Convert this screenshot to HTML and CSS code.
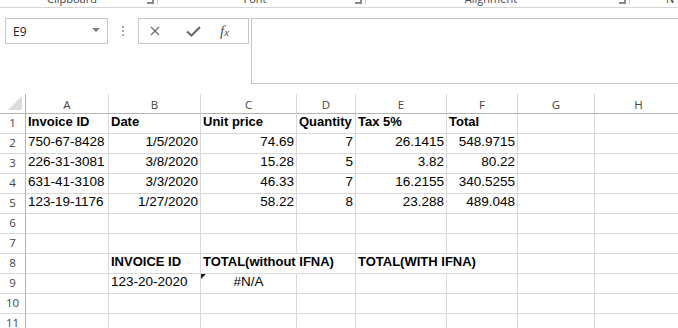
FILE: index.html
```html
<!DOCTYPE html>
<html>
<head>
<meta charset="utf-8">
<link rel="stylesheet" href="styles.css">
</head>
<body>
<div class="ribbon">
  <div class="grp g1"><span class="glabel">Clipboard</span><span class="launch"></span></div>
  <div class="grp g2"><span class="glabel">Font</span><span class="launch"></span></div>
  <div class="grp g3"><span class="glabel">Alignment</span><span class="launch"></span></div>
  <div class="grp g4"><span class="glabel">N</span></div>
</div>
<div class="fbar">
  <div class="namebox"><span class="nbtext">E9</span><span class="caret"></span></div>
  <div class="dots"><i></i><i></i><i></i></div>
  <div class="fnbox">
    <svg class="ico-x" width="10" height="10" viewBox="0 0 10 10"><path d="M1 1L9 9M9 1L1 9" stroke="#6f6f6f" stroke-width="1.4" fill="none"/></svg>
    <svg class="ico-ok" width="15" height="11" viewBox="0 0 15 11"><path d="M1 5.5L5.5 9.5L14 1" stroke="#6a6a6a" stroke-width="2.2" fill="none"/></svg>
    <span class="fx"><i>f</i><i class="sx">x</i></span>
  </div>
  <div class="finput"></div>
</div>
<div class="sheet">
  <div class="corner"><span class="tri"></span></div>
  <div class="ch">A</div><div class="ch">B</div><div class="ch">C</div><div class="ch">D</div><div class="ch">E</div><div class="ch">F</div><div class="ch">G</div><div class="ch">H</div>

  <div class="rh">1</div>
  <div class="c b">Invoice ID</div><div class="c b">Date</div><div class="c b">Unit price</div><div class="c b">Quantity</div><div class="c b">Tax 5%</div><div class="c b">Total</div><div class="c"></div><div class="c"></div>

  <div class="rh">2</div>
  <div class="c">750-67-8428</div><div class="c r">1/5/2020</div><div class="c r">74.69</div><div class="c r">7</div><div class="c r">26.1415</div><div class="c r">548.9715</div><div class="c"></div><div class="c"></div>

  <div class="rh">3</div>
  <div class="c">226-31-3081</div><div class="c r">3/8/2020</div><div class="c r">15.28</div><div class="c r">5</div><div class="c r">3.82</div><div class="c r">80.22</div><div class="c"></div><div class="c"></div>

  <div class="rh">4</div>
  <div class="c">631-41-3108</div><div class="c r">3/3/2020</div><div class="c r">46.33</div><div class="c r">7</div><div class="c r">16.2155</div><div class="c r">340.5255</div><div class="c"></div><div class="c"></div>

  <div class="rh">5</div>
  <div class="c">123-19-1176</div><div class="c r">1/27/2020</div><div class="c r">58.22</div><div class="c r">8</div><div class="c r">23.288</div><div class="c r">489.048</div><div class="c"></div><div class="c"></div>

  <div class="rh">6</div>
  <div class="c"></div><div class="c"></div><div class="c"></div><div class="c"></div><div class="c"></div><div class="c"></div><div class="c"></div><div class="c"></div>

  <div class="rh">7</div>
  <div class="c"></div><div class="c"></div><div class="c"></div><div class="c"></div><div class="c"></div><div class="c"></div><div class="c"></div><div class="c"></div>

  <div class="rh">8</div>
  <div class="c"></div><div class="c b">INVOICE ID</div><div class="c b ov">TOTAL(without IFNA)</div><div class="c"></div><div class="c b ov">TOTAL(WITH IFNA)</div><div class="c"></div><div class="c"></div><div class="c"></div>

  <div class="rh">9</div>
  <div class="c"></div><div class="c">123-20-2020</div><div class="c ctr err">#N/A<span class="errtri"></span></div><div class="c"></div><div class="c"></div><div class="c"></div><div class="c"></div><div class="c"></div>

  <div class="rh">10</div>
  <div class="c"></div><div class="c"></div><div class="c"></div><div class="c"></div><div class="c"></div><div class="c"></div><div class="c"></div><div class="c"></div>

  <div class="rh">11</div>
  <div class="c"></div><div class="c"></div><div class="c"></div><div class="c"></div><div class="c"></div><div class="c"></div><div class="c"></div><div class="c"></div>
</div>
</body>
</html>
```
FILE: styles.css
```css
html, body {
  margin: 0;
  padding: 0;
  background: #fff;
  overflow: hidden;
  width: 678px;
  height: 328px;
}
body {
  font-family: "Liberation Sans", Arial, sans-serif;
  color: #000;
}

/* ribbon remnant */
.ribbon {
  display: flex;
  height: 7px;
  border-bottom: 1px solid #d5d5d5;
  overflow: hidden;
}
.grp {
  display: flex;
  align-items: flex-start;
  box-sizing: border-box;
  height: 7px;
}
.g1 { width: 158px; }
.g2 { width: 208px; }
.g3 { width: 264px; }
.g4 { flex: 1; padding-left: 36px; }
.glabel {
  flex: 1;
  text-align: center;
  font-family: "Open Sans", "Noto Sans", sans-serif;
  font-size: 11px;
  line-height: 13px;
  color: #444;
  margin-top: -8px;
}
.g4 .glabel { flex: none; text-align: left; }
.launch {
  width: 7px;
  height: 4px;
  margin: 0 4px 0 3px;
  border-right: 2px solid #8a8a8a;
  border-bottom: 2px solid #8a8a8a;
  box-sizing: border-box;
  position: relative;
}
.launch::after {
  content: "";
  position: absolute;
  right: -6px;
  top: 0;
  width: 1px;
  height: 5px;
  background: #d0d0d0;
}

/* formula bar */
.fbar {
  display: flex;
  align-items: flex-start;
  padding: 10px 0 0 5px;
}
.namebox {
  width: 103px;
  height: 26px;
  box-sizing: border-box;
  border: 1px solid #c6c6c6;
  display: flex;
  align-items: center;
  justify-content: space-between;
  padding: 0 7px 0 7px;
}
.nbtext {
  font-family: "Open Sans", "Noto Sans", sans-serif;
  font-size: 12px;
  color: #222;
}
.caret {
  width: 0;
  height: 0;
  border-left: 4px solid transparent;
  border-right: 4px solid transparent;
  border-top: 4px solid #7a7a7a;
  margin-top: -3px;
}
.dots {
  width: 30px;
  height: 26px;
  display: flex;
  flex-direction: column;
  align-items: center;
  justify-content: center;
  gap: 2px;
}
.dots i {
  display: block;
  width: 2px;
  height: 2px;
  background: #a8a8a8;
}
.fnbox {
  width: 111px;
  height: 26px;
  box-sizing: border-box;
  border: 1px solid #c6c6c6;
  display: flex;
  align-items: center;
  padding-left: 11px;
}
.ico-x { margin-right: 26px; }
.ico-ok { margin-right: 19px; }
.fx {
  font-family: "Liberation Serif", "DejaVu Serif", serif;
  font-size: 15px;
  color: #505050;
  line-height: 1;
}
.fx .sx { font-size: 11px; }
.finput {
  flex: 1;
  height: 66px;
  margin-left: 2px;
  box-sizing: border-box;
  border: 1px solid #c6c6c6;
  border-right: none;
}

/* sheet */
.sheet {
  display: grid;
  grid-template-columns: 26px 83px 92px 96px 59px 91px 71px 77px 88px;
  grid-auto-rows: 20px;
  margin-top: 10px;
}
.corner {
  border-right: 1px solid #b4b4b4;
  border-bottom: 1px solid #b4b4b4;
  position: relative;
}
.tri {
  position: absolute;
  left: 8px;
  top: 2px;
  width: 0;
  height: 0;
  border-left: 14px solid transparent;
  border-bottom: 14px solid #dcdcdc;
}
.ch {
  border-right: 1px solid #d8d8d8;
  border-bottom: 1px solid #b4b4b4;
  display: flex;
  align-items: center;
  justify-content: center;
  font-family: "Open Sans", "Noto Sans", sans-serif;
  font-size: 11.5px;
  color: #444;
  padding-top: 1px;
}
.rh {
  border-right: 1px solid #b4b4b4;
  border-bottom: 1px solid #d8d8d8;
  display: flex;
  align-items: flex-end;
  justify-content: center;
  font-family: "Open Sans", "Noto Sans", sans-serif;
  font-size: 11.5px;
  line-height: 15px;
  color: #444;
  padding-bottom: 3px;
  box-sizing: border-box;
}
.c {
  border-right: 1px solid #d8d8d8;
  border-bottom: 1px solid #d8d8d8;
  display: flex;
  align-items: flex-end;
  font-size: 13.5px;
  line-height: 15px;
  padding: 0 2px 4px 2px;
  box-sizing: border-box;
  white-space: nowrap;
  overflow: visible;
  min-width: 0;
}
.r { justify-content: flex-end; }
.ctr { justify-content: center; }
.b { font-weight: bold; font-size: 13px; }
.ov { border-right-color: transparent; }
.err { position: relative; }
.errtri {
  position: absolute;
  left: 0;
  top: 0;
  width: 0;
  height: 0;
  border-top: 5px solid #1e1e1e;
  border-right: 5px solid transparent;
}
```
